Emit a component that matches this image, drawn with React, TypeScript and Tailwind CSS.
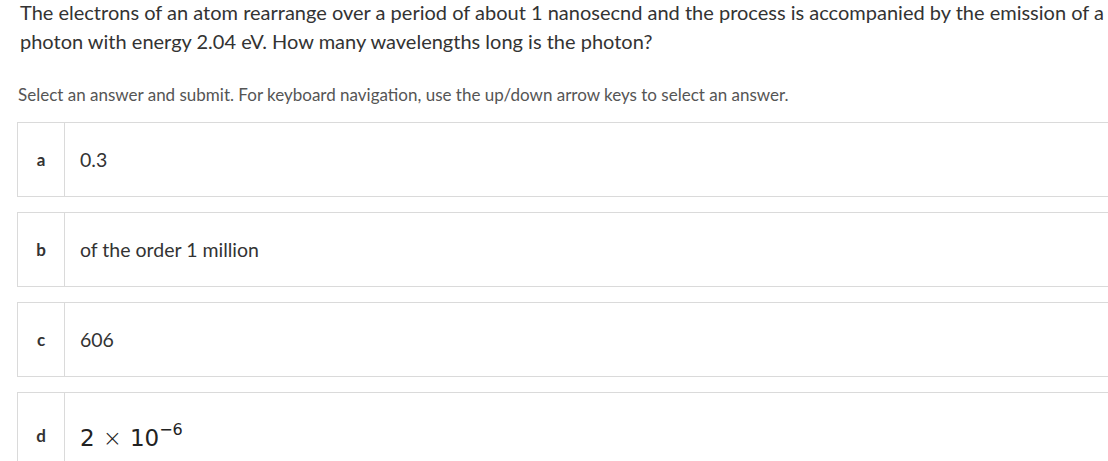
import React from 'react';

const options = [
  { key: 'a', text: '0.3' },
  { key: 'b', text: 'of the order 1 million' },
  { key: 'c', text: '606' },
];

const App: React.FC = () => {
  return (
    <div className="w-[1108px] h-[461px] overflow-hidden bg-white text-[#333] font-['Lato',_'Liberation_Sans',_sans-serif]">
      {/* Question */}
      <p className="pl-[20px] -mt-[2px] text-[20px] leading-[29px] text-[#333]">
        The electrons of an atom rearrange over a period of about 1 nanosecnd and the process is accompanied by the emission of a
        <br />
        photon with energy 2.04 eV. How many wavelengths long is the photon?
      </p>

      <p className="pl-[18px] mt-[27px] text-[17px] leading-[24px] text-[#555]">
        Select an answer and submit. For keyboard navigation, use the up/down arrow keys to select an answer.
      </p>

      <div className="pl-[17px] mt-[15px] flex flex-col gap-[15px]">
        {options.map(o => (
          <div key={o.key} className="w-[1100px] h-[75px] flex border border-[#dadada]">
            <div className="w-[47px] shrink-0 flex items-center justify-center border-r border-[#dadada] text-[17px] font-bold text-[#333]">
              {o.key}
            </div>
            <div className="flex items-center pl-[15px] text-[19.5px] text-[#333]">{o.text}</div>
          </div>
        ))}
        <div className="w-[1100px] h-[75px] flex border border-[#dadada]">
          <div className="w-[47px] shrink-0 flex items-center justify-center border-r border-[#dadada] text-[17px] font-bold text-[#333] pt-[12px]">
            d
          </div>
          <div className="flex items-center pl-[15px] pt-[18px] text-[23px] text-[#222] font-['DejaVu_Sans',_sans-serif]">
            <span>2</span>
            <span className="mx-[8px] font-light">×</span>
            <span>10</span>
            <sup className="text-[16px] -top-[0.55em]">−6</sup>
          </div>
        </div>
      </div>
    </div>
  );
};

export default App;
